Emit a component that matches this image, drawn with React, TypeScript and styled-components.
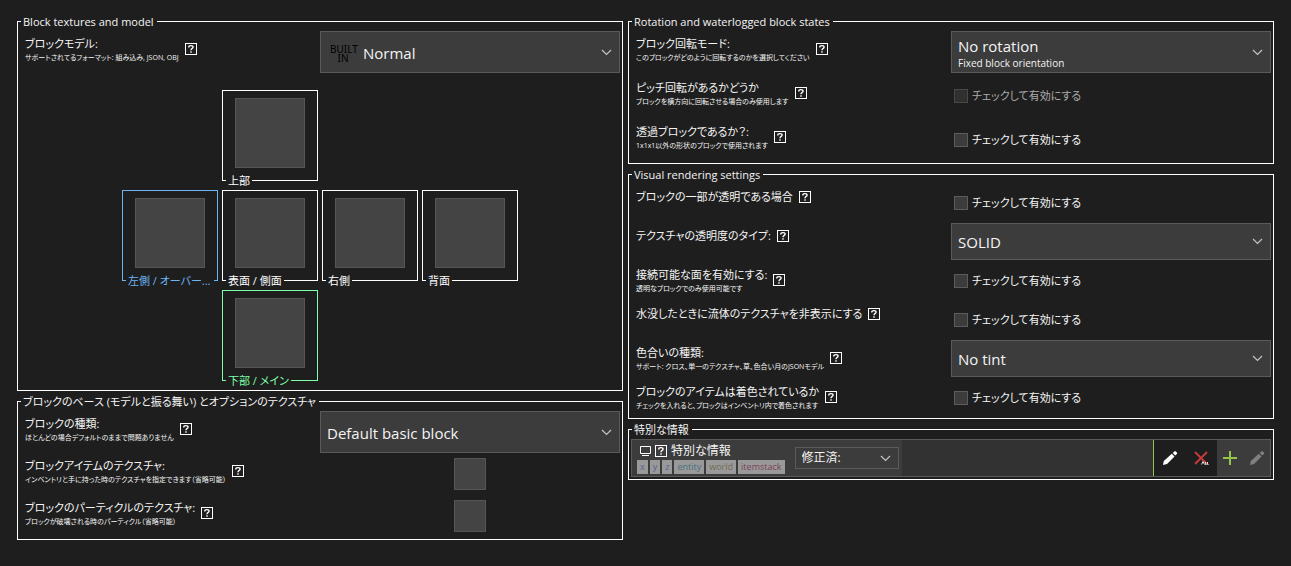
import React, { useId } from "react";
import styled, { createGlobalStyle } from "styled-components";

const GlobalStyle = createGlobalStyle`
  *, *::before, *::after { box-sizing: border-box; }
  body {
    margin: 0;
    background: #1e1e1e;
    color: #f4f4f4;
    font-family: "Open Sans", "Noto Sans CJK JP", sans-serif;
    font-size: 11px;
    line-height: 18px;
    font-feature-settings: "palt";
  }
  button, select, input { font: inherit; color: inherit; margin: 0; }
`;

const Page = styled.main`
  display: grid;
  grid-template-columns: minmax(0, 606fr) minmax(0, 646fr);
  gap: 5px;
  align-items: start;
  padding: 13px 17px 26px;
`;

const Column = styled.div`
  display: flex;
  flex-direction: column;
  gap: 2px;
`;

const Panel = styled.fieldset<{ $top?: number; $bottom?: number }>`
  min-width: 0;
  margin: 0;
  border: 1px solid #fff;
  padding: ${(p) => p.$top ?? 0}px 2px ${(p) => p.$bottom ?? 1}px;
`;

const Legend = styled.legend`
  height: 17px;
  line-height: 17px;
  margin-left: 1px;
  padding: 0 3px 0 2px;
  white-space: nowrap;
`;

const Row = styled.div<{ $height: number }>`
  display: grid;
  grid-template-columns: 1fr 1fr;
  height: ${(p) => p.$height}px;
`;

const LabelCell = styled.div<{ $top: number }>`
  display: flex;
  align-self: start;
  align-items: center;
  gap: 6px;
  padding: ${(p) => p.$top}px 0 0 5px;
  white-space: nowrap;
`;

const Title = styled.label`
  display: block;
`;

const Note = styled.small`
  display: block;
  font-size: 7px;
  line-height: 10px;
`;

const HelpButton = styled.button`
  display: block;
  flex: none;
  width: 12px;
  height: 12px;
  padding: 0;
  border: 1px solid #fff;
  background: none;

  svg { display: block; }
`;

const Control = styled.div`
  display: flex;
  align-items: center;
  justify-content: center;
`;

const SelectBox = styled.div<{ $height: number; $width?: string }>`
  display: grid;
  grid-template-columns: minmax(0, 1fr);
  align-items: center;
  width: ${(p) => p.$width ?? "100%"};
  height: ${(p) => p.$height}px;
  flex: none;

  > * { grid-area: 1 / 1; }
  > svg { justify-self: end; margin-right: 8px; pointer-events: none; }
`;

const Select = styled.select<{ $size: number; $left: number; $top: number; $bottom: number }>`
  appearance: none;
  width: 100%;
  height: 100%;
  border: 1px solid #5a5a5a;
  border-radius: 0;
  background: #3c3c3c;
  font-size: ${(p) => p.$size}px;
  padding: ${(p) => p.$top}px 24px ${(p) => p.$bottom}px ${(p) => p.$left}px;
`;

const SelectCaption = styled.span`
  align-self: end;
  padding: 0 0 2px 7px;
  font-size: 10px;
  line-height: 15px;
  pointer-events: none;
`;

const BuiltInMark = styled.span`
  width: 26px;
  margin-left: 10px;
  padding-top: 3px;
  color: #000;
  font-family: "Noto Sans", sans-serif;
  font-size: 10px;
  line-height: 9px;
  text-align: center;
  pointer-events: none;
`;

const CheckLabel = styled.label<{ $disabled?: boolean }>`
  display: flex;
  flex: 1;
  align-items: center;
  gap: 4px;
  padding-left: 3px;
  color: ${(p) => (p.$disabled ? "#aaa" : "#f4f4f4")};
`;

const Checkbox = styled.input`
  appearance: none;
  width: 14px;
  height: 14px;
  border: 1px solid #5c5c5c;
  background: #3c3c3c;

  &:checked { background: #93c54b; }
  &:disabled { border-color: #484848; background: #303030; }
`;

const TileGrid = styled.div`
  display: grid;
  grid-template-columns: repeat(4, 96px);
  grid-template-areas:
    ". top . ."
    "left front right back"
    ". bottom . .";
  gap: 9px 4px;
  justify-content: center;
  padding-top: 17px;
`;

const Tile = styled.div<{ $area: string; $color: string }>`
  position: relative;
  grid-area: ${(p) => p.$area};
  display: flex;
  justify-content: center;
  height: 91px;
  padding-top: 7px;
  border: 1px solid ${(p) => p.$color};
  color: ${(p) => p.$color};
`;

const TileCaption = styled.span<{ $fill?: boolean }>`
  position: absolute;
  left: 3px;
  right: ${(p) => (p.$fill ? "3px" : "auto")};
  bottom: -10px;
  padding: 0 2px;
  background: #1e1e1e;
  white-space: nowrap;
`;

const TextureButton = styled.button<{ $size: number }>`
  width: ${(p) => p.$size}px;
  height: ${(p) => p.$size}px;
  padding: 0;
  border: 1px solid #565656;
  background: #444;
`;

const Entry = styled.div`
  display: flex;
  height: 38px;
  border: 1px solid #5a5a5a;
  background: #323232;
`;

const EntryHead = styled.div`
  display: flex;
  align-items: center;
  gap: 10px;
  padding: 0 3px 0 5px;
  background: #3c3c3c;
`;

const EntryName = styled.div`
  display: flex;
  align-items: center;
  gap: 4px;
  height: 16px;
  padding-left: 3px;
  font-size: 12px;
`;

const Tags = styled.div`
  display: flex;
  gap: 2px;
  margin-top: 1px;
`;

const Tag = styled.span<{ $color: string }>`
  height: 14px;
  padding: 0 3px;
  background: #999;
  color: ${(p) => p.$color};
  font-family: "Open Sans", sans-serif;
  font-size: 9px;
  line-height: 14px;
`;

const ActionGroup = styled.div<{ $dark?: boolean }>`
  display: flex;
  align-items: center;
  justify-content: space-around;
  width: ${(p) => (p.$dark ? 64 : 53)}px;
  margin-left: ${(p) => (p.$dark ? "auto" : "0")};
  border-left: ${(p) => (p.$dark ? "1px solid #93c54b" : "none")};
  background: ${(p) => (p.$dark ? "#1e1e1e" : "#3c3c3c")};
`;

const IconButton = styled.button`
  display: grid;
  place-items: center;
  width: 20px;
  height: 20px;
  padding: 0;
  border: 0;
  background: none;
`;

function Help() {
  return (
    <HelpButton type="button" aria-label="ヘルプ">
      <svg width="10" height="10" viewBox="0 0 10 10" fill="none" stroke="#fff" strokeWidth="1.4">
        <path d="M2.8 3.4V3Q2.8 1.6 4.9 1.6Q7.1 1.6 7.1 3.1Q7.1 4 5.9 4.6Q5 5.1 5 6.3M5 7.3V8.8" />
      </svg>
    </HelpButton>
  );
}

function Chevron() {
  return (
    <svg width="11" height="7" viewBox="0 0 11 7" fill="none" stroke="#c4c4c4" strokeWidth="1.2">
      <path d="M1 1L5.5 5.5L10 1" />
    </svg>
  );
}

function Pencil({ color }: { color: string }) {
  return (
    <svg width="16" height="16" viewBox="0 0 16 16" fill={color}>
      <path d="M1 15L1.8 11L9.8 3.8L12.5 6.4L5 14ZM10.7 3L12.3 1.4Q13 .8 13.7 1.4L14.9 2.6Q15.5 3.3 14.9 4L13.3 5.6Z" />
    </svg>
  );
}

type FieldProps = {
  title: string;
  note?: string;
  height: number;
  top?: number;
  children: (id: string) => React.ReactNode;
};

function Field({ title, note, height, top = 5, children }: FieldProps) {
  const id = useId();
  return (
    <Row $height={height}>
      <LabelCell $top={top}>
        <div>
          <Title htmlFor={id}>{title}</Title>
          {note && <Note>{note}</Note>}
        </div>
        <Help />
      </LabelCell>
      <Control>{children(id)}</Control>
    </Row>
  );
}

type DropDownProps = {
  id?: string;
  label?: string;
  value: string;
  height: number;
  width?: string;
  size?: number;
  left?: number;
  caption?: string;
  builtIn?: boolean;
};

function DropDown({ id, label, value, height, width, size = 15, left = 6, caption, builtIn }: DropDownProps) {
  return (
    <SelectBox $height={height} $width={width}>
      <Select id={id} aria-label={label} $size={size} $left={left} $top={height > 40 && !caption ? 2 : 0} $bottom={caption ? 13 : 0}>
        <option>{value}</option>
      </Select>
      {builtIn && <BuiltInMark>BUILT IN</BuiltInMark>}
      {caption && <SelectCaption>{caption}</SelectCaption>}
      <Chevron />
    </SelectBox>
  );
}

function Check({ id, disabled }: { id: string; disabled?: boolean }) {
  return (
    <CheckLabel $disabled={disabled}>
      <Checkbox id={id} type="checkbox" disabled={disabled} />
      チェックして有効にする
    </CheckLabel>
  );
}

const tiles = [
  { area: "top", text: "上部", color: "#fff" },
  { area: "left", text: "左側 / オーバー...", color: "#6cb5f5", fill: true },
  { area: "front", text: "表面 / 側面", color: "#fff" },
  { area: "right", text: "右側", color: "#fff" },
  { area: "back", text: "背面", color: "#fff" },
  { area: "bottom", text: "下部 / メイン", color: "#7dffa7" },
];

const tags = [
  { text: "x", color: "#5a5f8a" },
  { text: "y", color: "#5a5f8a" },
  { text: "z", color: "#5a5f8a" },
  { text: "entity", color: "#47707f" },
  { text: "world", color: "#756a53" },
  { text: "itemstack", color: "#7b4257" },
];

export default function App() {
  return (
    <>
      <GlobalStyle />
      <Page lang="ja">
        <Column>
          <Panel $top={1} $bottom={9}>
            <Legend>Block textures and model</Legend>
            <Field title="ブロックモデル:" note="サポートされてるフォーマット: 組み込み, JSON, OBJ" height={42} top={4}>
              {(id) => <DropDown id={id} value="Normal" height={42} left={42} builtIn />}
            </Field>
            <TileGrid>
              {tiles.map((t) => (
                <Tile key={t.area} $area={t.area} $color={t.color}>
                  <TextureButton type="button" $size={70} aria-label={t.text} />
                  <TileCaption $fill={t.fill}>{t.text}</TileCaption>
                </Tile>
              ))}
            </TileGrid>
          </Panel>
          <Panel $top={1} $bottom={2}>
            <Legend>ブロックのベース (モデルと振る舞い) とオプションのテクスチャ</Legend>
            <Field title="ブロックの種類:" note="ほとんどの場合デフォルトのままで問題ありません" height={42} top={4}>
              {(id) => <DropDown id={id} value="Default basic block" height={42} />}
            </Field>
            <Field title="ブロックアイテムのテクスチャ:" note="インベントリと手に持った時のテクスチャを指定できます（省略可能）" height={42} top={4}>
              {(id) => <TextureButton id={id} type="button" $size={32} />}
            </Field>
            <Field title="ブロックのパーティクルのテクスチャ:" note="ブロックが破壊される時のパーティクル（省略可能）" height={42} top={4}>
              {(id) => <TextureButton id={id} type="button" $size={32} />}
            </Field>
          </Panel>
        </Column>
        <Column>
          <Panel>
            <Legend>Rotation and waterlogged block states</Legend>
            <Field title="ブロック回転モード:" note="このブロックがどのように回転するのかを選択してください" height={44}>
              {(id) => <DropDown id={id} value="No rotation" caption="Fixed block orientation" height={42} />}
            </Field>
            <Field title="ピッチ回転があるかどうか" note="ブロックを横方向に回転させる場合のみ使用します" height={44}>
              {(id) => <Check id={id} disabled />}
            </Field>
            <Field title="透過ブロックであるか？:" note="1x1x1以外の形状のブロックで使用されます" height={44}>
              {(id) => <Check id={id} />}
            </Field>
          </Panel>
          <Panel>
            <Legend>Visual rendering settings</Legend>
            <Field title="ブロックの一部が透明である場合" height={39}>
              {(id) => <Check id={id} />}
            </Field>
            <Field title="テクスチャの透明度のタイプ:" height={39}>
              {(id) => <DropDown id={id} value="SOLID" height={37} />}
            </Field>
            <Field title="接続可能な面を有効にする:" note="透明なブロックでのみ使用可能です" height={39}>
              {(id) => <Check id={id} />}
            </Field>
            <Field title="水没したときに流体のテクスチャを非表示にする" height={39}>
              {(id) => <Check id={id} />}
            </Field>
            <Field title="色合いの種類:" note="サポート: クロス、単一のテクスチャ、草、色合い月のJSONモデル" height={39}>
              {(id) => <DropDown id={id} value="No tint" height={37} />}
            </Field>
            <Field title="ブロックのアイテムは着色されているか" note="チェックを入れると、ブロックはインベントリ内で着色されます" height={39}>
              {(id) => <Check id={id} />}
            </Field>
          </Panel>
          <Panel $top={1} $bottom={2}>
            <Legend>特別な情報</Legend>
            <Entry>
              <EntryHead>
                <div>
                  <EntryName>
                    <svg width="11" height="11" viewBox="0 0 11 11" fill="none" stroke="#fff">
                      <path d="M.5 1.5H10.5V8.5H.5ZM2 10.5H9" />
                    </svg>
                    <Help />
                    <span>特別な情報</span>
                  </EntryName>
                  <Tags>
                    {tags.map((t) => (
                      <Tag key={t.text} $color={t.color}>{t.text}</Tag>
                    ))}
                  </Tags>
                </div>
                <DropDown label="特別な情報" value="修正済:" height={22} width="104px" size={12} />
              </EntryHead>
              <ActionGroup $dark>
                <IconButton type="button" aria-label="編集">
                  <Pencil color="#fff" />
                </IconButton>
                <IconButton type="button" aria-label="すべて削除">
                  <svg width="16" height="16" viewBox="0 0 16 16" fill="none">
                    <path d="M2 2L14 14M14 2L2 14" stroke="#c93a3a" strokeWidth="1.8" />
                    <path d="M8.5 14.5L10 11.5L11.5 14.5M12.5 12V14.5H13.5M14.5 12V14.5H15.5" stroke="#ddd" />
                  </svg>
                </IconButton>
              </ActionGroup>
              <ActionGroup>
                <IconButton type="button" aria-label="追加">
                  <svg width="16" height="16" viewBox="0 0 16 16" stroke="#93c54b" strokeWidth="2">
                    <path d="M8 1V15M1 8H15" />
                  </svg>
                </IconButton>
                <IconButton type="button" aria-label="変更">
                  <Pencil color="#808080" />
                </IconButton>
              </ActionGroup>
            </Entry>
          </Panel>
        </Column>
      </Page>
    </>
  );
}
